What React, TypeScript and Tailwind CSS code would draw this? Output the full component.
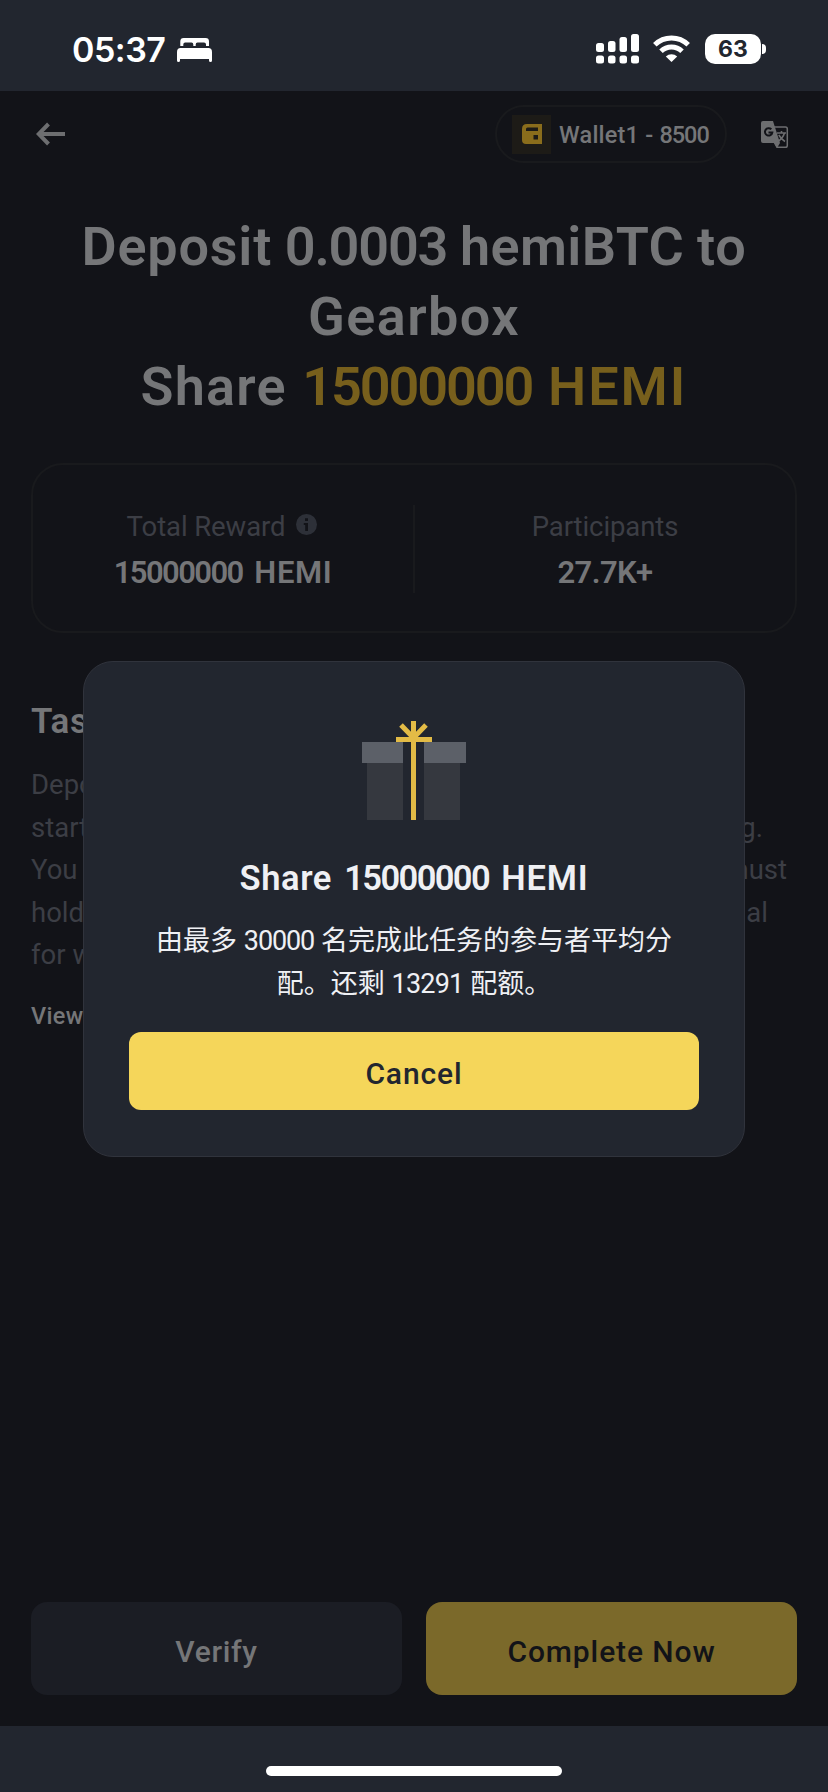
import { ReactNode } from "react";

const description = [
  { start: "Deposit", end: "", width: "w-[740px]" },
  { start: "starting", end: "g.", width: "w-[732px]" },
  { start: "You", end: "must", width: "w-[756px]" },
  { start: "hold", end: "al", width: "w-[737px]" },
  { start: "for wi", end: "", width: "w-[740px]" },
];

export default function App() {
  return (
    <div className="relative flex h-[1792px] w-[828px] flex-col overflow-hidden bg-[#121318] font-[Roboto,'Noto_Sans_CJK_SC',sans-serif] text-[#757678]">
      <StatusBar />
      <TopBar />
      <main className="flex flex-1 flex-col px-[31px]">
        <h1 className="mt-[49px] text-center text-[54px] leading-[70px] font-semibold whitespace-nowrap">
          <span className="block tracking-[0.8px] [word-spacing:-1.5px]">
            Deposit <span className="tracking-[-1.2px]">0.0003</span>{" "}
            <span className="tracking-[0.4px]">hemiBTC</span> to
          </span>
          <span className="block tracking-[1.4px]">Gearbox</span>
          <span className="block tracking-[1.2px] [word-spacing:1px]">
            Share{" "}
            <span className="text-[#775f1c]">
              <span className="tracking-[-2.1px]">15000000</span>{" "}
              <span className="tracking-[2px]">HEMI</span>
            </span>
          </span>
        </h1>
        <div className="mt-[41px] flex h-[170px] rounded-[32px] border-2 border-[#191a1d] pt-[42px]">
          <Stat label="Total Reward" info>
            <span className="tracking-[-1.6px]">15000000</span>{" "}
            <span className="tracking-[0.6px]">HEMI</span>
          </Stat>
          <div className="-mt-0.5 h-[88px] w-0.5 bg-[#191a1d]" />
          <Stat label="Participants">
            <span className="tracking-[-0.6px]">27.7K+</span>
          </Stat>
        </div>
        <h2 className="mt-[65px] text-[35px] leading-[48px] font-semibold tracking-[0.5px]">
          Task
        </h2>
        <div className="mt-[18px] text-[27.5px] leading-[42.6px] text-[#3c3e45]">
          {description.map((line) => (
            <p key={line.start} className={`flex justify-between ${line.width}`}>
              <span>{line.start}</span>
              <span>{line.end}</span>
            </p>
          ))}
        </div>
        <p className="mt-[21px] text-[23.5px] leading-9 font-medium tracking-[0.3px]">
          View
        </p>
      </main>
      <div className="mb-[31px] grid h-[93px] grid-cols-2 gap-6 px-[31px] text-[30px] font-medium">
        <button className="rounded-2xl bg-[#1b1d24] pt-1.5 tracking-[0.7px]">
          Verify
        </button>
        <button className="rounded-2xl bg-[#7b692a] pt-1.5 tracking-[0.9px] text-[#121318]">
          Complete Now
        </button>
      </div>
      <div className="flex h-[66px] justify-center bg-[#22262f] pt-10">
        <div className="h-2.5 w-[296px] rounded-full bg-white" />
      </div>
      <RewardDialog />
    </div>
  );
}

const StatusBar = () => {
  return (
    <div className="flex h-[91px] items-start bg-[#22262f] text-white">
      <span className="mt-[29px] ml-[72px] w-[105px] font-[Inter,sans-serif] text-[34px] leading-[42px] font-semibold tracking-[-0.5px]">
        05:37
      </span>
      <svg className="mt-[38px] h-6 w-9" viewBox="0 0 36 24" fill="#fff">
        <path d="M3.3 8V3.4Q3.3 0 6.7 0H28.600Q32 0 32 3.400V8H29V6.500Q29 4.600 27 4.600H20.500Q18.700 4.600 18.700 6.500V8H16.300V6.500Q16.300 4.600 14.500 4.600H8.200Q6.300 4.600 6.300 6.500V8Z" />
        <path d="M0 14Q0 10 3.600 10H31.400Q35 10 35 14V22.500Q35 24 33.500 24Q32 24 32 22.500V21H3V22.500Q3 24 1.500 24Q0 24 0 22.500Z" />
      </svg>
      <svg
        className="mt-[34px] ml-[383px] h-[30px] w-[43px]"
        viewBox="0 0 43 30"
        fill="#fff"
      >
        <rect x="0" y="9" width="8" height="9" rx="2.500" />
        <rect x="12" y="7" width="7.500" height="11" rx="2.500" />
        <rect x="23.500" y="3" width="7.500" height="15" rx="2.500" />
        <rect x="35" y="0" width="8" height="18" rx="2.500" />
        <rect x="0" y="21.500" width="8" height="8" rx="2.500" />
        <rect x="12" y="21.500" width="7.500" height="8" rx="2.500" />
        <rect x="23.500" y="21.500" width="7.500" height="8" rx="2.500" />
        <rect x="35" y="21.500" width="8" height="8" rx="2.500" />
      </svg>
      <svg
        className="mt-[35px] ml-3.5 h-[28px] w-[37px]"
        viewBox="0 0 37 28"
        fill="none"
        stroke="#fff"
        strokeWidth="5"
      >
        <path d="M1.800 9.800A24 24 0 0 1 35.200 9.800" />
        <path d="M8 16.200A15 15 0 0 1 29 16.200" />
        <path
          d="M12.800 21.500A8.200 8.200 0 0 1 24.200 21.500L18.500 27Z"
          fill="#fff"
          stroke="none"
        />
      </svg>
      <div className="mt-[34px] ml-[15px] flex items-center gap-px">
        <div className="flex h-[30px] w-[56px] items-center justify-center rounded-[10px] bg-white font-[Inter,sans-serif] text-[23px] font-bold text-[#22262f]">
          63
        </div>
        <div className="h-2.5 w-1 rounded-r-full bg-white" />
      </div>
    </div>
  );
};

const TopBar = () => {
  return (
    <div className="flex h-[72px] items-start pt-3.5 pr-[39px] pl-9">
      <svg
        className="mt-[17px] h-[24px] w-[30px]"
        viewBox="0 0 30 24"
        fill="none"
        stroke="#6d6e70"
        strokeWidth="4"
      >
        <path d="M29 12H3M12.500 2L2.700 12L12.500 22" />
      </svg>
      <div className="ml-auto flex h-[58px] w-[232px] items-center rounded-full border-2 border-[#191a1d] pl-[15px]">
        <div className="flex h-[39px] w-[39px] items-center justify-center bg-[#1d1b17]">
          <svg className="h-5 w-5" viewBox="0 0 20 20">
            <path
              fill="#8a6d1c"
              d="M5 0H20V20H4Q0 20 0 16V5Q0 0 5 0ZM5.500 3.500Q4 3.500 4 5V7H16V3.500ZM11.500 11V15.500H16V11Z"
              fillRule="evenodd"
            />
          </svg>
        </div>
        <span className="mt-0.5 ml-2 text-[23.5px] leading-8 font-medium tracking-[0.2px] whitespace-nowrap">
          Wallet1 - <span className="tracking-[-1px]">8500</span>
        </span>
      </div>
      <svg className="mt-4 ml-[34px] h-7 w-7" viewBox="0 0 28 28">
        <path
          fill="none"
          stroke="#6d6e70"
          strokeWidth="1.500"
          d="M13 6H24.500Q26.300 6 26.300 8V24.500Q26.300 26.300 24.500 26.300H16L13 21"
        />
        <path
          fill="none"
          stroke="#6d6e70"
          strokeWidth="1.600"
          d="M16 12H25M20.500 10V12M23.500 12Q22 17 17 20.500M17.800 14Q20 18 24 20.500"
        />
        <path
          fill="#6d6e70"
          d="M2 0H12L19 22L16 27L13.500 22H2Q0 22 0 20V2Q0 0 2 0Z"
        />
        <path
          fill="none"
          stroke="#121318"
          strokeWidth="2"
          d="M10.300 8.300A3.700 3.700 0 1 0 11.300 11.500H7.500"
        />
      </svg>
    </div>
  );
};

const Stat = ({
  label,
  children,
  info = false,
}: {
  label: string;
  children: ReactNode;
  info?: boolean;
}) => {
  return (
    <div className="flex flex-1 flex-col items-center">
      <div className="flex h-10 text-[27.5px] leading-10 tracking-[-0.1px] text-[#3c3e45]">
        {label}
        {info && (
          <svg
            className="mt-[7px] mr-0.5 ml-[11px] h-[21px] w-[21px]"
            viewBox="0 0 21 21"
          >
            <circle cx="10.500" cy="10.500" r="10.500" fill="#2d3038" />
            <path
              d="M9 4.300H12V7H9ZM7.800 9H12V17H9.200V11H7.800Z"
              fill="#121318"
            />
          </svg>
        )}
      </div>
      <p className="mt-1 text-[31px] leading-[44px] font-semibold [word-spacing:4px]">
        {children}
      </p>
    </div>
  );
};

const RewardDialog = () => {
  return (
    <div className="absolute top-[661px] left-[83px] flex h-[496px] w-[662px] flex-col rounded-[30px] border border-[#30333c] bg-[#22262f] px-[45px] pt-[59px] text-[#eff0f4]">
      <svg
        className="mx-auto h-[99px] w-[104px] shrink-0"
        viewBox="0 0 104 99"
        shapeRendering="crispEdges"
      >
        <path fill="#5c6068" d="M0 21H41V42H0ZM62 21H104V42H62Z" />
        <path fill="#35383f" d="M5 42H41V99H5ZM62 42H98V99H62Z" />
        <path fill="#e3bb46" d="M49 0H54V99H49ZM34 16H70V21H34Z" />
        <path
          stroke="#e3bb46"
          strokeWidth="5"
          shapeRendering="auto"
          d="M39 4L51.500 17L64 4"
          fill="none"
        />
      </svg>
      <h3 className="mt-[34px] text-center text-[34.5px] leading-[48px] font-semibold tracking-[0.6px] whitespace-nowrap [word-spacing:3px]">
        Share <span className="tracking-[-1.6px]">15000000</span>{" "}
        <span className="tracking-[0.8px]">HEMI</span>
      </h3>
      <p className="mt-[18px] text-center text-[27px] leading-[42.67px] whitespace-nowrap">
        由最多 <span className="tracking-[-1.1px]">30000</span>{" "}
        名完成此任务的参与者平均分
        <br />
        配。还剩 <span className="tracking-[-0.8px]">13291</span> 配额。
      </p>
      <button className="mt-[27px] h-[78px] shrink-0 rounded-xl bg-[#f5d65a] pt-1 text-[30px] font-medium tracking-[0.9px] text-[#22262f]">
        Cancel
      </button>
    </div>
  );
};
